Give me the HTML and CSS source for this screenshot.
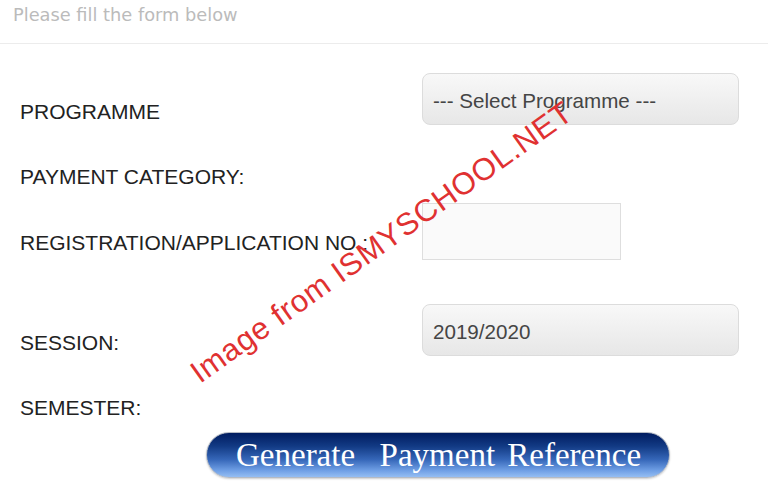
FILE: index.html
```html
<!DOCTYPE html>
<html lang="en">
<head>
<meta charset="utf-8">
<title>Payment Reference</title>
<link rel="stylesheet" href="styles.css">
</head>
<body>
<div class="page">
  <div class="header">Please fill the form below</div>
  <form class="form">
    <div class="row">
      <div class="label">PROGRAMME</div>
      <div class="select">--- Select Programme ---</div>
    </div>
    <div class="row">
      <div class="label">PAYMENT CATEGORY:</div>
    </div>
    <div class="row row-reg">
      <div class="label label-reg">REGISTRATION/APPLICATION NO.:</div>
      <div class="input"></div>
    </div>
    <div class="row row-session">
      <div class="label">SESSION:</div>
      <div class="select">2019/2020</div>
    </div>
    <div class="row">
      <div class="label">SEMESTER:</div>
    </div>
    <div class="actions">
      <div class="btn">Generate&nbsp; Payment Reference</div>
    </div>
  </form>
  <div class="watermark">Image from ISMYSCHOOL.NET</div>
</div>
</body>
</html>
```
FILE: styles.css
```css
html, body {
  margin: 0;
  padding: 0;
  background: #ffffff;
}
.page {
  position: relative;
  width: 768px;
  height: 496px;
  overflow: hidden;
}
.header {
  font-family: "DejaVu Sans", sans-serif;
  font-size: 17.8px;
  line-height: 21px;
  color: #bbbbbb;
  padding: 4px 13px 18px;
  border-bottom: 1px solid #ececec;
}
.form {
  display: flex;
  flex-direction: column;
  gap: 13px;
  padding: 29px 0 0 20px;
  margin: 0;
}
.row {
  display: flex;
  align-items: flex-start;
}
.row-reg { margin-top: 1px; }
.row-session { margin-top: 31px; }
.label {
  width: 402px;
  flex: none;
  padding-top: 27px;
  font-family: "Liberation Sans", Arial, sans-serif;
  font-size: 21px;
  line-height: 24px;
  color: #222;
  white-space: nowrap;
}
.label-reg { padding-top: 28px; }
.select {
  box-sizing: border-box;
  width: 317px;
  height: 52px;
  display: flex;
  align-items: center;
  padding: 3px 0 0 10px;
  border: 1px solid #dcdcdc;
  border-radius: 8px;
  background: linear-gradient(#f8f8f8, #e7e7e7);
  font-family: "Liberation Sans", Arial, sans-serif;
  font-size: 20.6px;
  color: #454545;
}
.input {
  box-sizing: border-box;
  width: 199px;
  height: 57px;
  border: 1px solid #dedede;
  background: #fafafa;
}
.actions {
  margin-top: -1px;
  padding-left: 186px;
}
.btn {
  box-sizing: border-box;
  width: 464px;
  height: 46px;
  display: flex;
  align-items: center;
  padding-left: 29px;
  border: 1px solid #b4bac4;
  border-radius: 23px;
  background: linear-gradient(#001c60 0%, #123a84 30%, #3566b8 60%, #6f9fe5 85%, #95bef3 100%);
  box-shadow: 0 1px 2px rgba(0,0,0,0.2);
  font-family: "Liberation Serif", "Times New Roman", serif;
  font-size: 33px;
  word-spacing: 4px;
  color: #ffffff;
  white-space: nowrap;
}
.watermark {
  position: absolute;
  left: 200px;
  top: 358px;
  font-family: "Liberation Sans", Arial, sans-serif;
  font-size: 31px;
  line-height: 31px;
  letter-spacing: 0.7px;
  color: #e03131;
  white-space: nowrap;
  transform-origin: 0 26.2px;
  transform: rotate(-35.4deg);
}
```
